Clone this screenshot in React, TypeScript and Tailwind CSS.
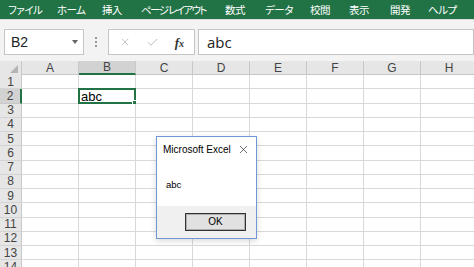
import { X, Check } from 'lucide-react'

const tabs = [
  { label: 'ファイル', w: 'w-[49px]' },
  { label: 'ホーム', w: 'w-[45px]' },
  { label: '挿入', w: 'w-[39px]' },
  { label: 'ページ レイアウト', w: 'w-[84px] tracking-[-1.6px]' },
  { label: '数式', w: 'w-[40px]' },
  { label: 'データ', w: 'w-[45px]' },
  { label: '校閲', w: 'w-[39px]' },
  { label: '表示', w: 'w-[41px]' },
  { label: '開発', w: 'w-[38px]' },
  { label: 'ヘルプ', w: 'w-[40px]' },
]
const cols = ['A', 'B', 'C', 'D', 'E', 'F', 'G', 'H']
const rows = [1, 2, 3, 4, 5, 6, 7, 8, 9, 10, 11, 12, 13, 14]

export default function App() {
  return (
    <div className="relative w-[474px] h-[267px] overflow-hidden bg-white font-['Liberation_Sans','Noto_Sans_CJK_JP',sans-serif]">
      {/* Ribbon tabs */}
      <div className="h-[19px] bg-[#217346] flex items-center pl-[8px] text-white text-[10.5px] tracking-[-0.5px] font-['Noto_Sans_CJK_JP',sans-serif] [font-feature-settings:'palt'] whitespace-nowrap">
        {tabs.map((t) => (
          <span key={t.label} className={`${t.w} shrink-0`}>
            {t.label}
          </span>
        ))}
      </div>

      {/* Formula bar */}
      <div className="h-[42px] bg-[#f3f3f3] flex items-start pt-[9px] border-t border-[#dadada]">
        <div className="ml-[4px] w-[80px] h-[26px] bg-white border border-[#c6c6c6] flex items-center justify-between pl-[6px] pr-[5px] text-[14px] text-[#222]">
          <span>B2</span>
          <span className="w-0 h-0 border-l-[3.5px] border-r-[3.5px] border-t-[4px] border-l-transparent border-r-transparent border-t-[#666]" />
        </div>
        <div className="w-[24px] h-[26px] flex flex-col items-center justify-center gap-[2px]">
          <span className="w-[2px] h-[2px] bg-[#999]" />
          <span className="w-[2px] h-[2px] bg-[#999]" />
          <span className="w-[2px] h-[2px] bg-[#999]" />
        </div>
        <div className="w-[87px] h-[26px] bg-white border border-[#c6c6c6] flex items-center justify-between px-[10px]">
          <X className="w-[12px] h-[12px] text-[#b0b0b0]" strokeWidth={1.5} />
          <Check className="w-[13px] h-[13px] text-[#b0b0b0]" strokeWidth={1.5} />
          <span className="font-['Liberation_Serif',serif] italic font-bold text-[13px] text-[#333] leading-none">
            f<span className="text-[10px]">x</span>
          </span>
        </div>
        <div className="ml-[3px] flex-1 h-[26px] bg-white border border-[#c6c6c6] flex items-center pl-[8px] text-[15px] text-[#222] font-['Open_Sans',sans-serif]">
          abc
        </div>
      </div>

      {/* Grid */}
      <div className="flex flex-col">
        <div className="flex h-[14px] bg-[#e6e6e6] text-[12px] text-[#444]">
          <div className="w-[22px] shrink-0 border-r border-[#c8c8c8] relative">
            <div className="absolute right-[3px] bottom-[2px] w-0 h-0 border-l-[8px] border-l-transparent border-b-[8px] border-b-[#b4b4b4]" />
          </div>
          {cols.map((c) => (
            <div
              key={c}
              className={
                c === 'B'
                  ? 'w-[57px] shrink-0 bg-[#d2d2d2] border-r border-[#c8c8c8] border-b-2 border-b-[#217346] flex items-center justify-center leading-none'
                  : 'w-[57px] shrink-0 border-r border-[#c8c8c8] border-b border-b-[#c8c8c8] flex items-center justify-center leading-none'
              }
            >
              {c}
            </div>
          ))}
        </div>
        {rows.map((r) => (
          <div key={r} className="flex h-[14.25px]">
            <div
              className={
                r === 2
                  ? 'w-[22px] shrink-0 bg-[#d2d2d2] border-r-2 border-[#217346] border-b border-b-[#c8c8c8] flex items-center justify-center text-[12px] text-[#444] leading-none'
                  : 'w-[22px] shrink-0 bg-[#e6e6e6] border-r border-[#c8c8c8] border-b border-b-[#d4d4d4] flex items-center justify-center text-[12px] text-[#444] leading-none'
              }
            >
              {r}
            </div>
            {cols.map((c) => (
              <div key={c} className="relative w-[57px] shrink-0 border-r border-b border-[#d9d9d9]">
                {r === 2 && c === 'B' && (
                  <div className="absolute -left-[1px] -top-[1px] w-[58px] h-[16px] border-2 border-[#217346] flex items-center pl-[1px] text-[13px] text-black leading-none">
                    abc
                    <span className="absolute -right-[3px] -bottom-[3px] w-[5px] h-[5px] bg-[#217346] border border-white" />
                  </div>
                )}
              </div>
            ))}
          </div>
        ))}
      </div>

      {/* Message box */}
      <div className="absolute left-[156px] top-[136px] w-[101px] h-[103px] bg-white border border-[#7196d6] flex flex-col font-['Liberation_Sans',sans-serif] shadow-[0_2px_6px_rgba(0,0,0,0.15)]">
        <div className="h-[24px] flex items-center justify-between pl-[6px] pr-[6px] text-[10px] text-black whitespace-nowrap">
          <span>Microsoft Excel</span>
          <X className="w-[13px] h-[13px] text-[#222]" strokeWidth={1.2} />
        </div>
        <div className="flex-1 pl-[9px] pt-[17px] text-[9.5px] text-black">abc</div>
        <div className="h-[32px] bg-[#f0f0f0] flex items-center justify-end pr-[11px]">
          <button className="w-[59px] h-[16px] border border-[#adadad] bg-[#e1e1e1] text-[10px] text-black leading-none outline outline-1 outline-[#333]">
            OK
          </button>
        </div>
      </div>
    </div>
  )
}
